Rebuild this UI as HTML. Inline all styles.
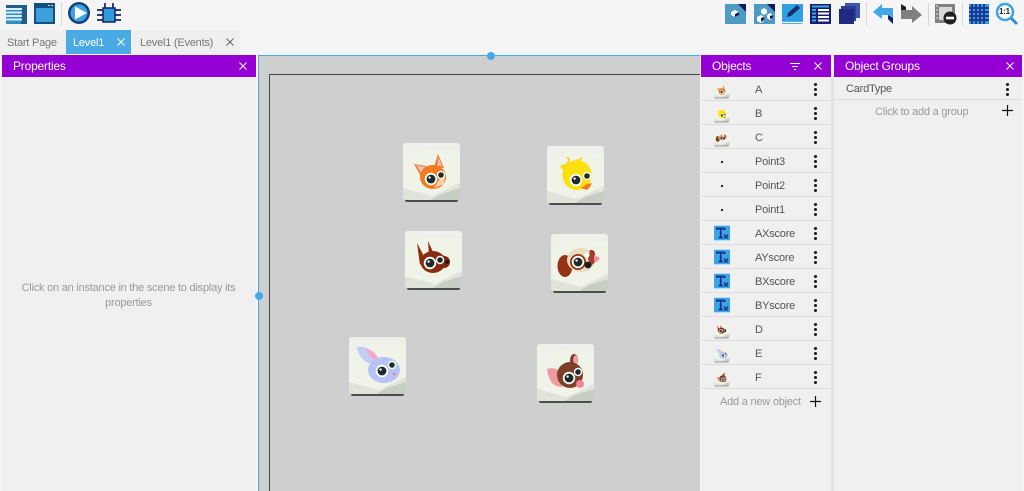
<!DOCTYPE html>
<html><head><meta charset="utf-8"><style>
html,body{margin:0;padding:0}
body{width:1024px;height:491px;overflow:hidden;background:#f5f5f5;position:relative;font-family:"Liberation Sans",sans-serif;font-size:11px;letter-spacing:-.22px;color:#555}
.a{position:absolute}
.hd{position:absolute;top:55px;height:22px;background:#9400d3;color:#fff;font-size:12px;letter-spacing:-.2px;line-height:23px}
.panel{position:absolute;top:77px;height:414px;background:#f0f0f0}
.row{position:absolute;left:701px;width:130px;height:23px;border-bottom:1px solid #dedede;line-height:25px}
.row b{position:absolute;left:54px;top:1px;font-weight:normal;white-space:nowrap;color:#555}
.d{position:absolute;width:3px;height:3px;border-radius:2px;background:#111;box-shadow:0 5px 0 #111,0 -5px 0 #111}
.tab{position:absolute;top:30px;height:24px;line-height:27px;background:#efefef;color:#777;white-space:nowrap}
svg{position:absolute;overflow:visible}
.s{filter:blur(.35px)}
</style></head><body>
<svg width="0" height="0" style="position:absolute"><defs>
<g id="card">
<rect x="2" y="54" width="53" height="6" rx="2" fill="#4a4f4c"/>
<rect x="0" y="1" width="57" height="57" rx="3" fill="#f0f3e8"/>
<path d="M0 4 a3 3 0 0 1 3-3 H54 a3 3 0 0 1 3 3 V9 L22 7 L0 17Z" fill="#efefec"/>
<path d="M0 46 L30 54 L57 41 V55 a3 3 0 0 1-3 3 H3 a3 3 0 0 1-3-3Z" fill="#e0e4db"/>
<path d="M28 58 L38 52 L57 46 V55 a3 3 0 0 1-3 3Z" fill="#c9cec5"/>
</g>
<g id="eye"><circle r="6.2" fill="#fff"/><circle r="4.4" fill="#1c2a2a"/><circle cx="-1.4" cy="-1.4" r="1.2" fill="#fff"/></g>
<g id="eye2"><circle r="4.2" fill="#fff"/><circle r="2.8" fill="#1c2a2a"/></g>
<g id="fox">
<path d="M11 22 L23 24 L28 30 L20 38Z" fill="#f47a20"/><path d="M13 23 L22 25 L20 34Z" fill="#f8b8c0"/>
<path d="M31 25 L35 12 L41 26Z" fill="#f47a20"/><path d="M34 24 L35.5 15 L39 24Z" fill="#f8b8c0"/>
<ellipse cx="30" cy="35" rx="13" ry="12" fill="#f47a20"/><path d="M31 46 L41 42 L42 32 L36 38Z" fill="#fbd3a8"/>
<use href="#eye" x="28" y="37"/><use href="#eye2" x="38" y="33"/></g>
<g id="bird">
<path d="M20 18 Q24 16 20 12 M29 15 Q35 16 34 12" stroke="#f4d616" stroke-width="1.6" fill="none"/>
<path d="M13 21 L20 18 L18 28Z" fill="#fbd90f"/>
<ellipse cx="30" cy="30" rx="14.5" ry="15" fill="#fbe00e"/>
<use href="#eye" x="29" y="35"/><use href="#eye2" x="40" y="31"/>
<path d="M34 43 L40 39 L45 38 L43 42 L40 45Z" fill="#f47a20"/></g>
<g id="deer">
<path d="M15 35 L12 13 L20 28Z M24 25 L23 11 L28 22Z" fill="#8e2d10"/>
<path d="M17 25 Q28 18 40 26 L30 28Z" fill="#d99b5c"/>
<ellipse cx="28" cy="32" rx="12.5" ry="11" fill="#8a2c10"/><ellipse cx="39" cy="32" rx="6" ry="6" fill="#7a2810"/>
<use href="#eye" x="25" y="33"/><use href="#eye2" x="35" y="30"/><circle cx="42" cy="32" r="1.8" fill="#111"/></g>
<g id="dog">
<ellipse cx="14" cy="33" rx="7.5" ry="11" fill="#953315"/>
<ellipse cx="30" cy="27" rx="14" ry="12" fill="#eadcc0"/>
<path d="M39 17 Q45 16 44 24 L44 29 L40 33 L37 26Z" fill="#a33c28"/>
<path d="M43 22 L49 25 L46 29 L43 28Z" fill="#f0909a"/>
<circle cx="27" cy="29" r="8" fill="#953315"/><use href="#eye" x="27" y="29"/>
<circle cx="37" cy="32" r="3.4" fill="#1c1c1c"/><circle cx="36" cy="22" r="2.6" fill="#fff"/></g>
<g id="rabbit">
<path d="M8 11 Q20 9 29 22 L22 28 Q10 24 8 11Z" fill="#c3cdf6"/><path d="M17 13 Q25 14 29 22 L25 24 Q19 19 17 13Z" fill="#f5a8c8"/>
<ellipse cx="35" cy="34" rx="16" ry="13" fill="#b7c3f4"/>
<use href="#eye" x="33" y="35"/><use href="#eye2" x="43" y="29"/><circle cx="45" cy="38" r="1.4" fill="#e88"/></g>
<g id="monkey">
<path d="M10 26 Q20 23 26 32 L25 44 Q12 44 10 26Z" fill="#f29aa4"/>
<ellipse cx="37" cy="17" rx="4" ry="6" fill="#80402b"/><ellipse cx="38.5" cy="17" rx="2.3" ry="4.6" fill="#f3a0a8"/>
<circle cx="33" cy="32" r="13" fill="#7d3f27"/>
<use href="#eye" x="32" y="35"/><use href="#eye2" x="41" y="29"/>
<ellipse cx="43" cy="41" rx="4" ry="4" fill="#f0889a"/></g>
<g id="tx"><rect width="16" height="16" fill="#3aa6e3"/><path d="M3 5V3.5H10.5V5 M6.7 3.5V12.5 M4.8 12.5H8.7" stroke="#1a2a8c" stroke-width="1.7" fill="none"/><path d="M10 9.5L14 13.5M14 9.5L10 13.5" stroke="#1a2a8c" stroke-width="1.3"/><path d="M0 .5H16M0 15.5H16" stroke="#aee0f8"/></g>
</defs></svg>

<!-- top toolbar -->
<svg class="s" style="left:0;top:0" width="1024" height="30" viewBox="0 0 1024 30">
<rect x="6" y="5" width="21" height="19" fill="#2d8fc4"/><path d="M6 5H27V24H21V9H6Z" fill="#1f5e86"/><path d="M6 9H22M6 12.5H22M6 16H22M6 19.5H22" stroke="#d9eefa" stroke-width="2"/>
<rect x="34" y="3" width="21" height="21" fill="#14507e"/><rect x="36" y="8" width="17" height="14" fill="#39a0dc"/><path d="M48 5.5h2M51 5.5h2" stroke="#cde"/>
<rect x="61" y="3" width="1" height="23" fill="#d8d8d8"/>
<circle cx="79" cy="13" r="11" fill="#153f7c"/><circle cx="79" cy="13" r="8.5" fill="#3aa3e0"/><path d="M75 6.5L87 13L75 19.5Z" fill="#fff"/>
<rect x="103" y="8" width="12" height="14" fill="#2f9bd8" stroke="#10246e" stroke-width="1.5"/>
<path d="M97 10h6M97 15h6M97 20h6M115 10h6M115 15h6M115 20h6M105 3v5M113 3v5" stroke="#10246e" stroke-width="1.7"/>
<rect x="725" y="4" width="21" height="20" fill="#4d9ac5"/><path d="M738 4H746V12Z" fill="#11195f"/><path d="M731 12l4-2 4 2v3l-4 2-4-2z" fill="#fff"/><path d="M735 14l4-2v3l-4 2z" fill="#11195f"/>
<rect x="754" y="4" width="21" height="20" fill="#4d9ac5"/><path d="M767 4H775V12Z" fill="#11195f"/><path d="M757 17l4-2 3 2v4l-3 2-4-2zM767 15l3-2 3 2v3l-3 2-3-2zM761 10l3-2 3 2v3l-3 2-3-2z" fill="#fff"/><path d="M761 18v4l3-2v-3zM770 16v3l3-1v-3z" fill="#11195f"/>
<rect x="782" y="4" width="21" height="17" fill="#2f9fdf"/><path d="M787 17l1-4 9-8 3 3-9 8z" fill="#14306e"/><path d="M782 21.5H803M782 23.5H802" stroke="#55aee3"/>
<rect x="810" y="4" width="21" height="20" fill="#14206e"/><path d="M812 6.5H829" stroke="#3fa5e0" stroke-width="2"/><path d="M812 10H816M812 13.5H816M812 17H816M812 20.5H816" stroke="#3fa5e0" stroke-width="2"/><path d="M818 10H829M818 13.5H829M818 17H829M818 20.5H829" stroke="#fff" stroke-width="2"/>
<rect x="845" y="3" width="15" height="15" fill="#3c57a8"/><rect x="841" y="6" width="15" height="15" fill="#2b3d94"/><rect x="839" y="9" width="15" height="15" fill="#1f2a80"/>
<rect x="866" y="3" width="1" height="23" fill="#d8d8d8"/>
<path d="M873 12L882 4V8H893V24L888 19V15H882V19Z" fill="#45a8e6"/><path d="M888 15L893 18V24L888 19Z" fill="#14206e"/>
<path d="M901 4L906 7V13L901 10Z" fill="#222"/><path d="M901 10L906 10H912V6L922 15L912 23V19H906L901 19Z" fill="#808080"/>
<rect x="928" y="3" width="1" height="23" fill="#d8d8d8"/>
<rect x="935" y="4" width="20" height="19" fill="#808080"/><rect x="939" y="7" width="13" height="13" fill="#d8d8d8"/><path d="M936 6h2M936 10h2M936 14h2M936 18h2" stroke="#eee"/>
<circle cx="950" cy="18" r="6.5" fill="#222"/><rect x="946" y="16.7" width="8" height="2.6" fill="#fff"/>
<rect x="962" y="3" width="1" height="23" fill="#d8d8d8"/>
<rect x="969" y="4" width="20" height="20" fill="#2f9ad8"/><path d="M972 4v20M976 4v20M980 4v20M984 4v20M969 8h20M969 12h20M969 16h20M969 20h20" stroke="#1f2c8e" stroke-width="1.7"/>
<circle cx="1005" cy="12" r="8" fill="#fff" stroke="#3aa3e0" stroke-width="2.5"/><path d="M1011 18l6 6" stroke="#2d8fd0" stroke-width="3"/>
</svg>
<div class="a" style="left:999px;top:7px;font-size:8px;font-weight:bold;color:#123">1:1</div>

<!-- tabs -->
<div class="tab" style="left:0;width:66px;"><span style="margin-left:7px">Start Page</span></div>
<div class="tab" style="left:66px;width:65px;background:#4aaae3;color:#fff"><span style="margin-left:7px">Level1</span>
<svg style="left:51px;top:8px" width="8" height="8"><path d="M.5.5l7 7M7.5.5l-7 7" stroke="#fff"/></svg></div>
<div class="tab" style="left:131px;width:109px;"><span style="margin-left:9px">Level1 (Events)</span>
<svg style="left:95px;top:8px" width="8" height="8"><path d="M.5.5l7 7M7.5.5l-7 7" stroke="#666"/></svg></div>

<!-- Properties -->
<div class="hd" style="left:2px;width:254px"><span style="margin-left:11px">Properties</span>
<svg style="left:237px;top:7px" width="8" height="8"><path d="M.5.5l7 7M7.5.5l-7 7" stroke="#fff"/></svg></div>
<div class="panel" style="left:2px;width:254px"></div>
<div class="a" style="left:16px;top:281px;width:225px;text-align:center;color:#999;line-height:15px">Click on an instance in the scene to display its<br>properties</div>

<!-- Scene -->
<div class="a" style="left:258px;top:55px;width:442px;height:436px;background:#cfcfcf;border-top:1px solid #45aae8;border-left:1px solid #45aae8;box-sizing:border-box"></div>
<div class="a" style="left:269px;top:74px;width:431px;height:417px;border-top:1px solid #444;border-left:1px solid #444;box-sizing:border-box"></div>
<div class="a" style="left:487px;top:52px;width:8px;height:8px;border-radius:50%;background:#45aae8"></div>
<div class="a" style="left:255px;top:292px;width:8px;height:8px;border-radius:50%;background:#45aae8"></div>

<svg class="s" style="left:0;top:0" width="700" height="491">
<g transform="translate(403,142)"><use href="#card"/><use href="#fox"/></g>
<g transform="translate(547,145)"><use href="#card"/><use href="#bird"/></g>
<g transform="translate(405,230)"><use href="#card"/><use href="#deer"/></g>
<g transform="translate(551,233)"><use href="#card"/><use href="#dog"/></g>
<g transform="translate(349,336)"><use href="#card"/><use href="#rabbit"/></g>
<g transform="translate(537,343)"><use href="#card"/><use href="#monkey"/></g>
</svg>

<!-- Objects -->
<div class="hd" style="left:701px;width:130px"><span style="margin-left:11px">Objects</span>
<svg style="left:89px;top:8px" width="11" height="8"><path d="M0 .5H10M2 3.5H8M4 6.5H6" stroke="#fff"/></svg>
<svg style="left:113px;top:7px" width="8" height="8"><path d="M.5.5l7 7M7.5.5l-7 7" stroke="#fff"/></svg></div>
<div class="panel" style="left:701px;width:130px"></div>
<div class="hd" style="left:834px;width:188px"><span style="margin-left:11px">Object Groups</span>
<svg style="left:172px;top:7px" width="8" height="8"><path d="M.5.5l7 7M7.5.5l-7 7" stroke="#fff"/></svg></div>
<div class="panel" style="left:834px;width:188px"></div>
<div class="a" style="left:831px;top:77px;width:3px;height:414px;background:#e3e3e3"></div>

<div class="row" style="top:77px"><b>A</b><i class="d" style="left:113px;top:11px"></i></div>
<div class="row" style="top:101px"><b>B</b><i class="d" style="left:113px;top:11px"></i></div>
<div class="row" style="top:125px"><b>C</b><i class="d" style="left:113px;top:11px"></i></div>
<div class="row" style="top:149px"><b>Point3</b><i class="d" style="left:113px;top:11px"></i></div>
<div class="row" style="top:173px"><b>Point2</b><i class="d" style="left:113px;top:11px"></i></div>
<div class="row" style="top:197px"><b>Point1</b><i class="d" style="left:113px;top:11px"></i></div>
<div class="row" style="top:221px"><b>AXscore</b><i class="d" style="left:113px;top:11px"></i></div>
<div class="row" style="top:245px"><b>AYscore</b><i class="d" style="left:113px;top:11px"></i></div>
<div class="row" style="top:269px"><b>BXscore</b><i class="d" style="left:113px;top:11px"></i></div>
<div class="row" style="top:293px"><b>BYscore</b><i class="d" style="left:113px;top:11px"></i></div>
<div class="row" style="top:317px"><b>D</b><i class="d" style="left:113px;top:11px"></i></div>
<div class="row" style="top:341px"><b>E</b><i class="d" style="left:113px;top:11px"></i></div>
<div class="row" style="top:365px"><b>F</b><i class="d" style="left:113px;top:11px"></i></div>
<div class="a" style="left:720px;top:396px;color:#999">Add a new object</div>
<svg style="left:810px;top:396px" width="11" height="11"><path d="M5.5 0V11M0 5.5H11" stroke="#111" stroke-width="1.2"/></svg>

<svg class="s" style="left:0;top:0" width="1024" height="491">
<g transform="translate(714,82) scale(.27)"><use href="#card"/><use href="#fox"/></g>
<g transform="translate(714,106) scale(.27)"><use href="#card"/><use href="#bird"/></g>
<g transform="translate(714,130) scale(.27)"><use href="#card"/><use href="#dog"/></g>
<rect x="721" y="161" width="2" height="2" fill="#222"/>
<rect x="721" y="185" width="2" height="2" fill="#222"/>
<rect x="721" y="209" width="2" height="2" fill="#222"/>
<use href="#tx" x="714" y="225"/>
<use href="#tx" x="714" y="249"/>
<use href="#tx" x="714" y="273"/>
<use href="#tx" x="714" y="297"/>
<g transform="translate(714,322) scale(.27)"><use href="#card"/><use href="#deer"/></g>
<g transform="translate(714,346) scale(.27)"><use href="#card"/><use href="#rabbit"/></g>
<g transform="translate(714,370) scale(.27)"><use href="#card"/><use href="#monkey"/></g>
</svg>

<!-- Groups -->
<div class="a" style="left:834px;top:77px;width:188px;height:22px;border-bottom:1px solid #dedede;line-height:25px"><span style="margin-left:12px">CardType</span><i class="d" style="left:172px;top:11px"></i></div>
<div class="a" style="left:875px;top:106px;color:#999">Click to add a group</div>
<svg style="left:1002px;top:105px" width="11" height="11"><path d="M5.5 0V11M0 5.5H11" stroke="#111" stroke-width="1.2"/></svg>
</body></html>
